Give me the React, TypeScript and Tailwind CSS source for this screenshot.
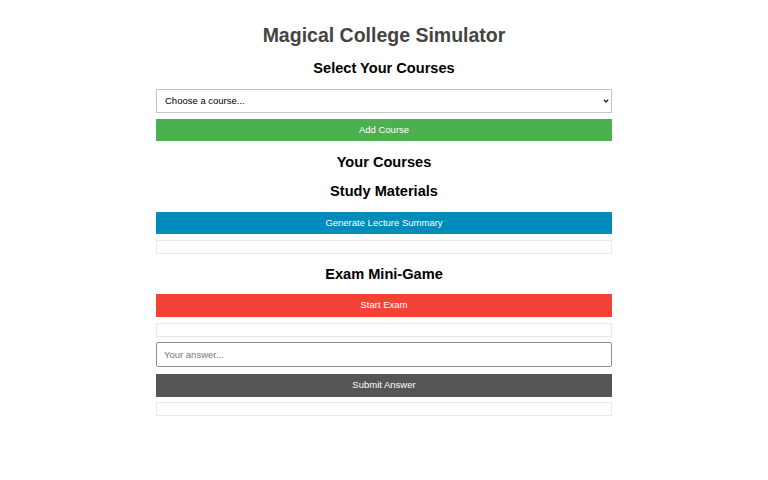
import { useState } from "react";

const courses = [
  "Potions 101",
  "Defense Against the Dark Arts",
  "Charms & Enchantments",
  "Transfiguration",
  "Herbology",
];

export default function App() {
  const [selected, setSelected] = useState("");
  const [answer, setAnswer] = useState("");

  return (
    <div className="min-h-screen bg-white font-['Liberation_Sans',Arial,sans-serif]">
      <div className="mx-auto flex w-[456px] flex-col pt-[24px]">
        <h1 className="text-center text-[19.5px] font-bold leading-[22px] text-[#444444]">
          Magical College Simulator
        </h1>

        {/* Course picker */}
        <h2 className="mt-[13.5px] text-center text-[14.6px] font-bold leading-[17px] text-black">
          Select Your Courses
        </h2>
        <div className="relative mt-[12.5px]">
          <select
            value={selected}
            onChange={(e) => setSelected(e.target.value)}
            className="block h-[24px] w-full appearance-none border border-[#c4c4c4] bg-white pl-[8px] pr-[16px] text-[9.5px] text-black"
          >
            <option value="">Choose a course...</option>
            {courses.map((c) => (
              <option key={c} value={c}>
                {c}
              </option>
            ))}
          </select>
          <svg
            className="pointer-events-none absolute right-[3px] top-[10px] h-[4px] w-[6px]"
            viewBox="0 0 6 4"
            fill="none"
          >
            <path d="M0.8 0.8 L3 3 L5.2 0.8" stroke="#222" strokeWidth="1.3" />
          </svg>
        </div>
        <button className="mt-[6px] h-[22px] w-full bg-[#4caf50] text-[9.5px] text-white">
          Add Course
        </button>

        <h2 className="mt-[12.5px] text-center text-[14.6px] font-bold leading-[17px] text-black">
          Your Courses
        </h2>

        {/* Study materials */}
        <h2 className="mt-[12px] text-center text-[14.6px] font-bold leading-[17px] text-black">
          Study Materials
        </h2>
        <button className="mt-[12.5px] h-[22px] w-full bg-[#008cba] text-[9.5px] text-white">
          Generate Lecture Summary
        </button>
        <div className="mt-[6px] h-[14px] w-full border border-[#e8e8e8]" />

        {/* Exam */}
        <h2 className="mt-[12px] text-center text-[14.6px] font-bold leading-[17px] text-black">
          Exam Mini-Game
        </h2>
        <button className="mt-[11px] h-[23px] w-full bg-[#f44336] text-[9.5px] text-white">
          Start Exam
        </button>
        <div className="mt-[6px] h-[14px] w-full border border-[#e8e8e8]" />
        <input
          value={answer}
          onChange={(e) => setAnswer(e.target.value)}
          placeholder="Your answer..."
          className="mt-[5px] h-[25px] w-full rounded-[2px] border border-[#8f8f8f] px-[7px] text-[9.5px] text-black outline-none placeholder:text-[#757575]"
        />
        <button className="mt-[7px] h-[23px] w-full bg-[#555555] text-[9.5px] text-white">
          Submit Answer
        </button>
        <div className="mt-[5px] h-[14px] w-full border border-[#e8e8e8]" />
      </div>
    </div>
  );
}
